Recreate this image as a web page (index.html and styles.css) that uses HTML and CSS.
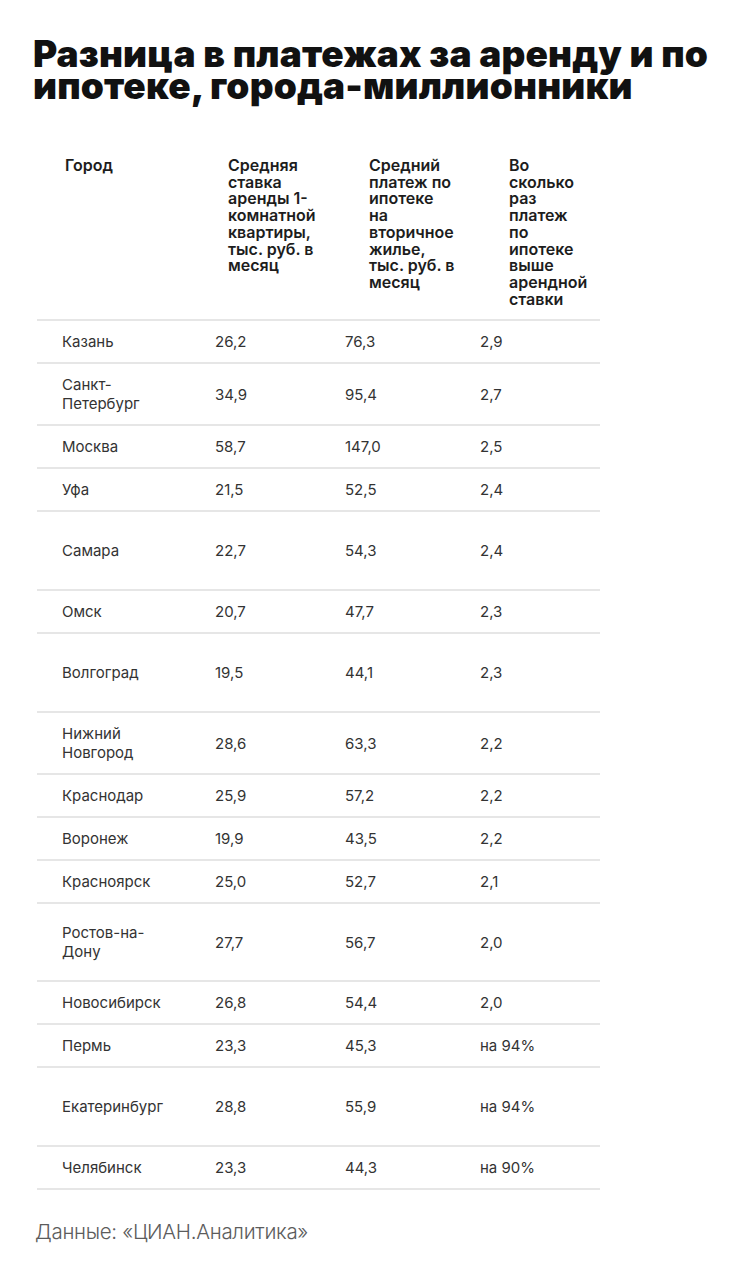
FILE: index.html
```html
<!DOCTYPE html>
<html lang="ru">
<head>
<meta charset="utf-8">
<title>Разница в платежах</title>
<link rel="stylesheet" href="styles.css">
</head>
<body>
<div class="page">
  <h1 class="title">Разница в платежах за аренду и по<br>ипотеке, города-миллионники</h1>
  <div class="table">
    <div class="thead">
      <div class="th">Город</div>
      <div class="th">Средняя<br>ставка<br>аренды 1-<br>комнатной<br>квартиры,<br>тыс. руб. в<br>месяц</div>
      <div class="th">Средний<br>платеж по<br>ипотеке<br>на<br>вторичное<br>жилье,<br>тыс. руб. в<br>месяц</div>
      <div class="th">Во<br>сколько<br>раз<br>платеж<br>по<br>ипотеке<br>выше<br>арендной<br>ставки</div>
    </div>
    <div class="row"><div>Казань</div><div>26,2</div><div>76,3</div><div>2,9</div></div>
    <div class="row"><div>Санкт-<br>Петербург</div><div>34,9</div><div>95,4</div><div>2,7</div></div>
    <div class="row"><div>Москва</div><div>58,7</div><div>147,0</div><div>2,5</div></div>
    <div class="row"><div>Уфа</div><div>21,5</div><div>52,5</div><div>2,4</div></div>
    <div class="row tall"><div>Самара</div><div>22,7</div><div>54,3</div><div>2,4</div></div>
    <div class="row"><div>Омск</div><div>20,7</div><div>47,7</div><div>2,3</div></div>
    <div class="row tall"><div>Волгоград</div><div>19,5</div><div>44,1</div><div>2,3</div></div>
    <div class="row"><div>Нижний<br>Новгород</div><div>28,6</div><div>63,3</div><div>2,2</div></div>
    <div class="row"><div>Краснодар</div><div>25,9</div><div>57,2</div><div>2,2</div></div>
    <div class="row"><div>Воронеж</div><div>19,9</div><div>43,5</div><div>2,2</div></div>
    <div class="row"><div>Красноярск</div><div>25,0</div><div>52,7</div><div>2,1</div></div>
    <div class="row tall-two"><div>Ростов-на-<br>Дону</div><div>27,7</div><div>56,7</div><div>2,0</div></div>
    <div class="row"><div>Новосибирск</div><div>26,8</div><div>54,4</div><div>2,0</div></div>
    <div class="row"><div>Пермь</div><div>23,3</div><div>45,3</div><div>на 94%</div></div>
    <div class="row tall"><div>Екатеринбург</div><div>28,8</div><div>55,9</div><div>на 94%</div></div>
    <div class="row"><div>Челябинск</div><div>23,3</div><div>44,3</div><div>на 90%</div></div>
  </div>
  <p class="source">Данные: «ЦИАН.Аналитика»</p>
</div>
</body>
</html>
```
FILE: styles.css
```css
html, body {
  margin: 0;
  padding: 0;
  background: #ffffff;
}

.page {
  width: 746px;
  padding-top: 38px;
  box-sizing: border-box;
}

.title {
  margin: 0 0 0 33px;
  font-family: Inter, "Liberation Sans", sans-serif;
  font-weight: 900;
  font-size: 37px;
  line-height: 32px;
  letter-spacing: 0.15px;
  color: #111111;
}

.table {
  margin: 55px 0 0 37px;
  width: 563px;
  font-family: Inter, "Noto Sans", sans-serif;
}

.thead {
  display: grid;
  grid-template-columns: 163px 141px 140px 1fr;
  padding: 0 0 12px 28px;
  border-bottom: 2px solid #e6e6e6;
}

.th {
  font-weight: 600;
  font-size: 16px;
  line-height: 16.7px;
  color: #1d1d1d;
}

.row {
  display: grid;
  grid-template-columns: 153px 130px 135px 1fr;
  align-items: center;
  padding: 11px 0 11px 25px;
  border-bottom: 2px solid #e6e6e6;
  font-size: 15px;
  line-height: 19px;
  color: #333333;
}

.row.tall {
  padding: 29px 0 29px 25px;
}

.row.tall-two {
  padding: 19px 0 19px 25px;
}

.source {
  margin: 30px 0 0 35px;
  font-family: Inter, "Noto Sans", sans-serif;
  font-weight: 300;
  font-size: 20.5px;
  line-height: 24px;
  color: #5c5c5c;
  letter-spacing: -0.3px;
}
```
